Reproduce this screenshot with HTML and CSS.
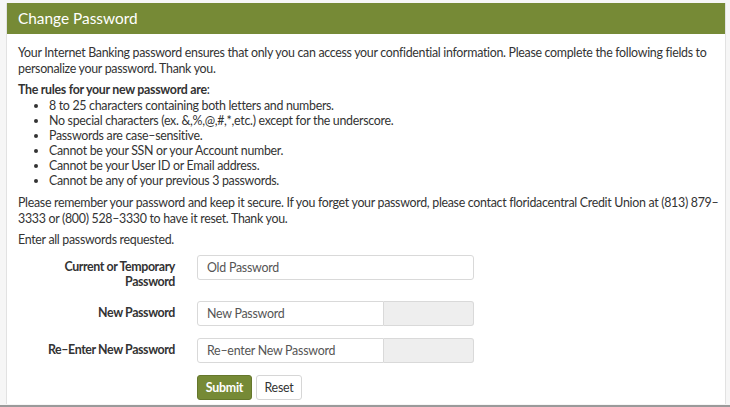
FILE: index.html
```html
<!DOCTYPE html>
<html>
<head>
<meta charset="utf-8">
<link rel="stylesheet" href="styles.css">
</head>
<body>
<div class="page">
  <div class="panel">
    <div class="panel-head">Change Password</div>
    <div class="panel-body">
      <p class="intro">Your Internet Banking password ensures that only you can access your confidential information. Please complete the following fields to personalize your password. Thank you.</p>
      <p class="rules-title"><b>The rules for your new password are</b>:</p>
      <ul class="rules">
        <li>8 to 25 characters containing both letters and numbers.</li>
        <li>No special characters (ex. &amp;,%,@,#,*,etc.) except for the underscore.</li>
        <li>Passwords are case–sensitive.</li>
        <li>Cannot be your SSN or your Account number.</li>
        <li>Cannot be your User ID or Email address.</li>
        <li>Cannot be any of your previous 3 passwords.</li>
      </ul>
      <p class="remember">Please remember your password and keep it secure. If you forget your password, please contact floridacentral Credit Union at (813) 879–3333 or (800) 528–3330 to have it reset. Thank you.</p>
      <p class="enter">Enter all passwords requested.</p>
      <form class="form">
        <div class="row">
          <label class="label">Current or Temporary Password</label>
          <div class="field"><input class="input full" type="password" placeholder="Old Password"></div>
        </div>
        <div class="row">
          <label class="label">New Password</label>
          <div class="field group"><input class="input part" type="password" placeholder="New Password"><span class="addon"></span></div>
        </div>
        <div class="row">
          <label class="label">Re–Enter New Password</label>
          <div class="field group"><input class="input part" type="password" placeholder="Re–enter New Password"><span class="addon"></span></div>
        </div>
        <div class="row buttons">
          <span class="label"></span>
          <div class="field btns">
            <button type="button" class="btn btn-submit">Submit</button>
            <button type="button" class="btn btn-reset">Reset</button>
          </div>
        </div>
      </form>
    </div>
  </div>
</div>
</body>
</html>
```
FILE: styles.css
```css
html, body {
  margin: 0;
  padding: 0;
}
body {
  width: 730px;
  height: 407px;
  overflow: hidden;
  background: #f6f6f6;
  font-family: Lato, "Open Sans", sans-serif;
  font-size: 12.4px;
  letter-spacing: -0.3px;
  color: #333;
  position: relative;
}
body::after {
  content: "";
  position: absolute;
  left: 0;
  right: 0;
  bottom: 0;
  height: 2px;
  background: #9a9a9a;
}
.page {
  padding: 3px 4px 0 6px;
  height: 404px;
  box-sizing: border-box;
}
.panel {
  background: #fff;
  border-left: 1px solid #e2e2e2;
  border-right: 1px solid #e2e2e2;
  height: 100%;
}
.panel-head {
  background: #768a36;
  color: #fff;
  font-size: 15.4px;
  letter-spacing: 0;
  height: 31px;
  line-height: 30px;
  padding-left: 11px;
}
.panel-body {
  padding: 11px 4px 0 11px;
}
p {
  margin: 0;
  line-height: 16px;
}
.rules-title {
  margin-top: 5px;
}
.rules {
  margin: 0;
  padding-left: 31px;
  line-height: 15px;
}
.remember {
  margin-top: 7px;
}
.enter {
  margin-top: 5px;
}
.form {
  margin-top: 7px;
  display: flex;
  flex-direction: column;
  gap: 12px;
}
.row {
  display: flex;
  align-items: flex-start;
}
.label {
  width: 147px;
  flex: none;
  padding: 4px 22px 0 10px;
  text-align: right;
  font-weight: 700;
  line-height: 15px;
  letter-spacing: -0.4px;
}
.field {
  display: flex;
  width: 277px;
}
.input {
  height: 25px;
  box-sizing: border-box;
  border: 1px solid #d9d9d9;
  border-radius: 3px;
  padding: 0 9px;
  font-family: inherit;
  font-size: 12.4px;
  letter-spacing: -0.24px;
  color: #555;
  outline: none;
  background: #fff;
}
.input::placeholder {
  color: #555;
}
.full {
  width: 277px;
}
.part {
  width: 187px;
  border-radius: 3px 0 0 3px;
}
.addon {
  width: 90px;
  height: 25px;
  box-sizing: border-box;
  background: #eeeeee;
  border: 1px solid #d9d9d9;
  border-left: 0;
  border-radius: 0 3px 3px 0;
}
.btns {
  gap: 4px;
}
.btn {
  height: 25px;
  font-family: inherit;
  font-size: 12.4px;
  letter-spacing: -0.24px;
  border-radius: 3px;
  padding: 0;
  cursor: pointer;
}
.btn-submit {
  width: 55px;
  background: #768a36;
  border: 1px solid #65772c;
  color: #fff;
  font-weight: 700;
}
.btn-reset {
  width: 46px;
  background: #fff;
  border: 1px solid #d6d6d6;
  color: #333;
}
```
